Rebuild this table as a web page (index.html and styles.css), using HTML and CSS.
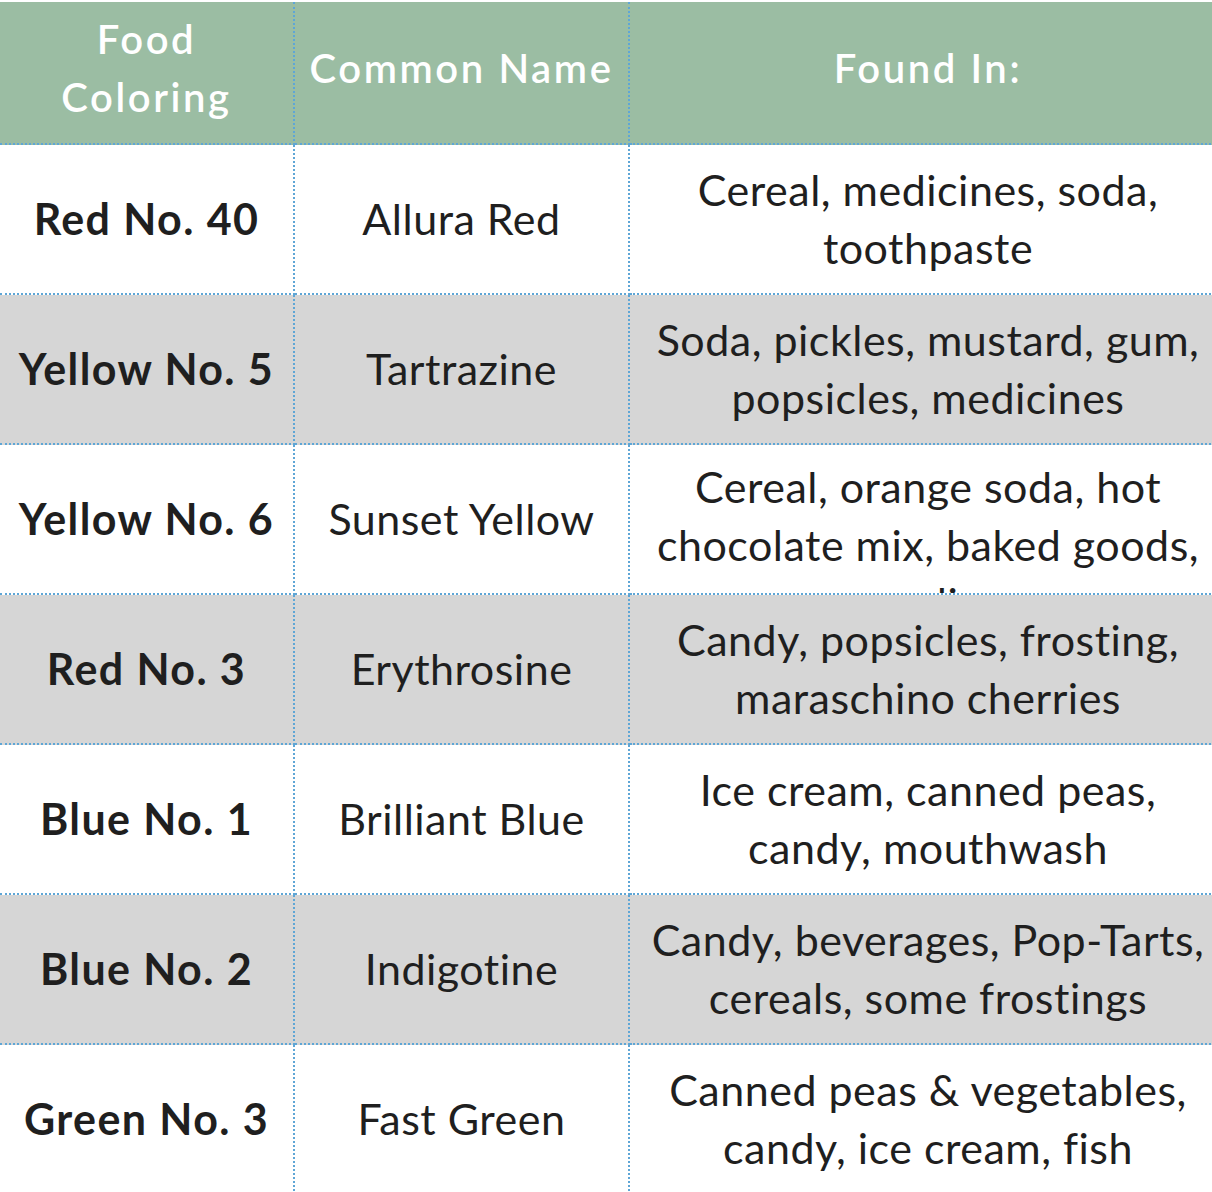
FILE: index.html
```html
<!DOCTYPE html>
<html>
<head>
<meta charset="utf-8">
<link rel="stylesheet" href="styles.css">
</head>
<body>
<div class="table">
  <div class="cell head">Food<br>Coloring</div>
  <div class="cell head">Common Name</div>
  <div class="cell head last">Found In:</div>

  <div class="cell name">Red No. 40</div>
  <div class="cell">Allura Red</div>
  <div class="cell last">Cereal, medicines, soda,<br>toothpaste</div>

  <div class="cell name gray">Yellow No. 5</div>
  <div class="cell gray">Tartrazine</div>
  <div class="cell gray last">Soda, pickles, mustard, gum,<br>popsicles, medicines</div>

  <div class="cell name">Yellow No. 6</div>
  <div class="cell">Sunset Yellow</div>
  <div class="cell last">Cereal, orange soda, hot<br>chocolate mix, baked goods,<br>candies</div>

  <div class="cell name gray">Red No. 3</div>
  <div class="cell gray">Erythrosine</div>
  <div class="cell gray last">Candy, popsicles, frosting,<br>maraschino cherries</div>

  <div class="cell name">Blue No. 1</div>
  <div class="cell">Brilliant Blue</div>
  <div class="cell last">Ice cream, canned peas,<br>candy, mouthwash</div>

  <div class="cell name gray">Blue No. 2</div>
  <div class="cell gray">Indigotine</div>
  <div class="cell gray last">Candy, beverages, Pop-Tarts,<br>cereals, some frostings</div>

  <div class="cell name">Green No. 3</div>
  <div class="cell">Fast Green</div>
  <div class="cell last">Canned peas &amp; vegetables,<br>candy, ice cream, fish</div>
</div>
</body>
</html>
```
FILE: styles.css
```css
html, body {
  margin: 0;
  padding: 0;
  background: #ffffff;
  overflow: hidden;
}
body {
  font-family: "Lato", "Liberation Sans", sans-serif;
  color: #1f1f1f;
}
.table {
  margin-top: 2px;
  display: grid;
  grid-template-columns: 295px 335px 596px;
  grid-auto-rows: 150px;
  grid-template-rows: 143px;
  width: 1226px;
}
.cell {
  box-sizing: border-box;
  border-right: 2px dotted #5ea6d6;
  border-bottom: 2px dotted #5ea6d6;
  display: flex;
  flex-direction: column;
  justify-content: safe center;
  align-items: center;
  text-align: center;
  padding: 13px 0;
  overflow: hidden;
  font-size: 43px;
  line-height: 58px;
  letter-spacing: 0.5px;
  white-space: nowrap;
}
.cell.last {
  border-right: none;
}
.head {
  background: #9bbda3;
  color: #ffffff;
  font-size: 40px;
  font-weight: 600;
  letter-spacing: 2.6px;
  padding: 0 0 10px 0;
}
.name {
  font-weight: 700;
  letter-spacing: 1.4px;
}
.gray {
  background: #d6d6d6;
}
```
